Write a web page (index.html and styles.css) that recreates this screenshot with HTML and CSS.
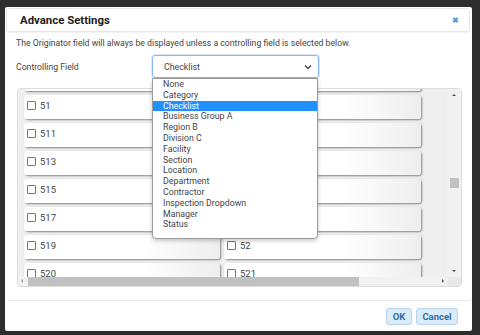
FILE: index.html
```html
<!DOCTYPE html>
<html lang="en">
<head>
  <meta charset="UTF-8" />
  <title>Advance Settings</title>
  <link rel="stylesheet" href="styles.css">
</head>
<body>
  <div class="modal">
    <div class="modal-header">
      <h2 class="modal-title">Advance Settings</h2>
      <span class="close">&#x2716;</span>
    </div>

    <p class="intro">The Originator field will always be displayed unless a controlling field is selected below.</p>

    <div class="field-row">
      <label class="field-label">Controlling Field</label>
      <div class="select-wrap">
        <div class="select-box">
          <span>Checklist</span>
          <svg class="chevron" width="8" height="6" viewBox="0 0 8 6"><path d="M1 1.5 L4 4.5 L7 1.5" fill="none" stroke="#444" stroke-width="1.4"/></svg>
        </div>
        <ul class="dropdown">
          <li>None</li>
          <li>Category</li>
          <li class="selected">Checklist</li>
          <li>Business Group A</li>
          <li>Region B</li>
          <li>Division C</li>
          <li>Facility</li>
          <li>Section</li>
          <li>Location</li>
          <li>Department</li>
          <li>Contractor</li>
          <li>Inspection Dropdown</li>
          <li>Manager</li>
          <li>Status</li>
        </ul>
      </div>
    </div>

    <div class="panel">
      <div class="panel-view">
        <div class="card-grid">
          <div class="card"><span class="check"></span>5</div>
          <div class="card"><span class="check"></span>50</div>
          <div class="card"><span class="check"></span>51</div>
          <div class="card"><span class="check"></span>510</div>
          <div class="card"><span class="check"></span>511</div>
          <div class="card"><span class="check"></span>512</div>
          <div class="card"><span class="check"></span>513</div>
          <div class="card"><span class="check"></span>514</div>
          <div class="card"><span class="check"></span>515</div>
          <div class="card"><span class="check"></span>516</div>
          <div class="card"><span class="check"></span>517</div>
          <div class="card"><span class="check"></span>518</div>
          <div class="card"><span class="check"></span>519</div>
          <div class="card"><span class="check"></span>52</div>
          <div class="card"><span class="check"></span>520</div>
          <div class="card"><span class="check"></span>521</div>
        </div>
      </div>
      <div class="vbar">
        <span class="arrow up"></span>
        <span class="vthumb"></span>
        <span class="arrow down"></span>
      </div>
      <div class="hbar">
        <span class="arrow left"></span>
        <span class="hthumb"></span>
        <span class="arrow right"></span>
      </div>
      <div class="corner"></div>
    </div>

    <div class="modal-footer">
      <button class="button">OK</button>
      <button class="button">Cancel</button>
    </div>
  </div>
</body>
</html>
```

FILE: styles.css
```css
body {
  font-family: Roboto, 'Liberation Sans', sans-serif;
  background-color: #2e2e2e;
  color: #333;
  margin: 0;
  width: 480px;
  height: 335px;
  overflow: hidden;
}

.modal {
  margin: 7px 0 0 5px;
  width: 467px;
  height: 324px;
  background-color: #fff;
  border-radius: 2px;
  box-sizing: border-box;
  padding-top: 1px;
}

.modal-header {
  margin: 0 2px 0 1px;
  height: 24px;
  box-sizing: border-box;
  border: 1px solid #e6e6e6;
  border-radius: 3px;
  box-shadow: 0 1px 1px rgba(0, 0, 0, 0.05);
  display: flex;
  align-items: center;
  justify-content: space-between;
  padding: 0 10px 0 13px;
}

.modal-title {
  margin: 0;
  font-size: 11.4px;
  font-weight: bold;
  color: #222;
}

.close {
  color: #5b9bd5;
  font-size: 8px;
  font-weight: bold;
}

.intro {
  margin: 5px 0 0 11px;
  font-size: 8.7px;
  line-height: 12px;
  color: #444;
}

.field-row {
  display: flex;
  align-items: center;
  margin: 6px 0 0 11px;
  height: 23px;
}

.field-label {
  width: 136px;
  font-size: 8.7px;
  color: #444;
}

.select-wrap {
  position: relative;
  width: 167px;
}

.select-box {
  height: 23px;
  box-sizing: border-box;
  border: 1px solid #86b7fe;
  border-radius: 3px;
  box-shadow: 0 0 0 1px rgba(13, 110, 253, 0.15);
  display: flex;
  align-items: center;
  justify-content: space-between;
  padding: 0 6px 0 11px;
  font-size: 8.8px;
  color: #444;
}

.dropdown {
  position: absolute;
  top: 23px;
  left: 0;
  width: 166px;
  height: 161px;
  box-sizing: border-box;
  margin: 0;
  padding: 0;
  list-style: none;
  background-color: #fff;
  border: 1px solid #9a9a9a;
  border-radius: 0 0 4px 4px;
  box-shadow: 0 2px 4px rgba(0, 0, 0, 0.2);
  z-index: 5;
}

.dropdown li {
  font-size: 8.8px;
  line-height: 10.8px;
  padding-left: 10px;
  color: #444;
}

.dropdown li.selected {
  background-color: #1e90ff;
  color: #fff;
}

.panel {
  margin: 10px 0 0 12px;
  width: 445px;
  height: 199px;
  box-sizing: border-box;
  border: 1px solid #ddd;
  border-radius: 4px;
  background-color: #efefef;
  display: grid;
  grid-template-columns: 1fr 14px;
  grid-template-rows: 1fr 9px;
  overflow: hidden;
}

.panel-view {
  overflow: hidden;
}

.card-grid {
  display: grid;
  grid-template-columns: 196px 197px;
  grid-auto-rows: 24px;
  gap: 4px;
  padding-left: 6px;
  margin-top: -22px;
}

.card {
  background: linear-gradient(to right, #fff 60%, #eee);
  border-radius: 3px;
  box-shadow: 1px 1px 2px rgba(0, 0, 0, 0.45);
  font-size: 9.5px;
  color: #444;
  padding: 6px 3px;
  display: flex;
  align-items: flex-start;
  line-height: 10px;
}

.check {
  width: 7px;
  height: 7px;
  border: 1px solid #777;
  border-radius: 1px;
  margin-right: 4px;
  flex-shrink: 0;
}

.vbar {
  background-color: #f1f1f1;
  position: relative;
}

.vthumb {
  position: absolute;
  left: 3px;
  top: 89px;
  width: 9px;
  height: 10px;
  background-color: #c1c1c1;
}

.hbar {
  background-color: #f1f1f1;
  position: relative;
}

.hthumb {
  position: absolute;
  left: 10px;
  top: 0;
  width: 331px;
  height: 9px;
  background-color: #c1c1c1;
}

.corner {
  background-color: #e9e9e9;
}

.arrow {
  position: absolute;
  width: 0;
  height: 0;
  border: 2.5px solid transparent;
}

.arrow.up {
  left: 5px;
  top: 3px;
  border-bottom-color: #505050;
}

.arrow.down {
  left: 5px;
  bottom: 3px;
  border-top-color: #505050;
}

.arrow.left {
  left: 1px;
  top: 2px;
  border-right-color: #a0a0a0;
}

.arrow.right {
  right: 1px;
  top: 2px;
  border-left-color: #505050;
}

.modal-footer {
  margin: 13px 2px 0 3px;
  border-top: 1px solid #e8e8e8;
  padding: 7px 12px 0 0;
  display: flex;
  justify-content: flex-end;
  gap: 4px;
}

.button {
  background-color: #dcebf8;
  color: #2f6ea5;
  border: 1px solid #b7d4ee;
  border-radius: 3px;
  padding: 0 6px;
  height: 17px;
  font-family: inherit;
  font-size: 9.5px;
  font-weight: bold;
  cursor: pointer;
}

.button:first-child {
  width: 26px;
  padding: 0;
}

.button:last-child {
  width: 42px;
  padding: 0;
}
```
